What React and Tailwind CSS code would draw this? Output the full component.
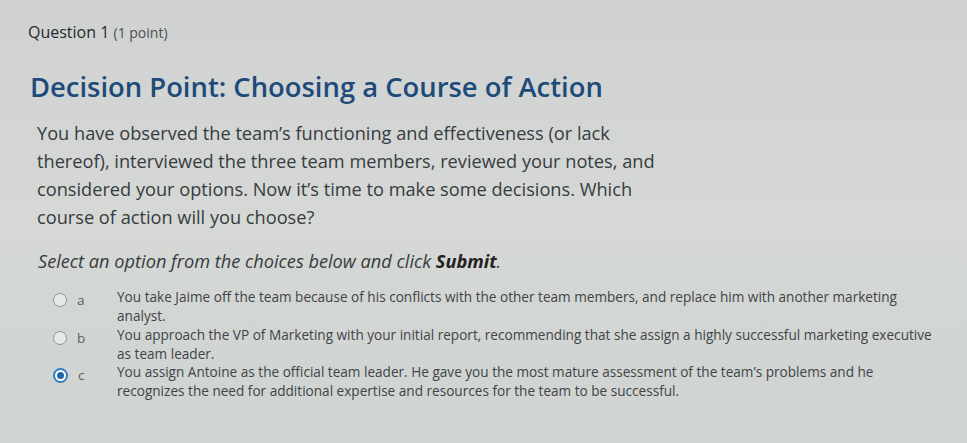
import React, { useState } from 'react';

const options = [
  {
    id: 'a',
    text: 'You take Jaime off the team because of his conflicts with the other team members, and replace him with another marketing analyst.',
  },
  {
    id: 'b',
    text: 'You approach the VP of Marketing with your initial report, recommending that she assign a highly successful marketing executive as team leader.',
  },
  {
    id: 'c',
    text: "You assign Antoine as the official team leader. He gave you the most mature assessment of the team\u2019s problems and he recognizes the need for additional expertise and resources for the team to be successful.",
  },
];

const Radio = ({ checked }) =>
  checked ? (
    <span className="flex h-[15px] w-[15px] items-center justify-center rounded-full border-2 border-[#2f7fc0] bg-white">
      <span className="h-[7px] w-[7px] rounded-full bg-[#1f63a8]" />
    </span>
  ) : (
    <span className="h-[14px] w-[14px] rounded-full border border-[#8f9596] bg-[#e6e8e7]" />
  );

const App = () => {
  const [selected, setSelected] = useState('c');

  return (
    <div
      className="h-[443px] w-full overflow-hidden bg-gradient-to-b from-[#cfd2d1] via-[#d5d8d5] to-[#cfd3d1] text-[#3b4044]"
      style={{ fontFamily: '"Open Sans", "Liberation Sans", sans-serif' }}
    >
      <div className="px-7 pt-[20px]">
        <div className="text-[16px] text-[#262a2d]">
          Question 1 <span className="text-[14px] text-[#4a5055]">(1 point)</span>
        </div>

        <h1 className="mt-[26px] pl-[2px] text-[27.4px] font-semibold leading-[34px] text-[#1d4b79]">
          Decision Point: Choosing a Course of Action
        </h1>

        <p className="mt-[15px] w-[720px] pl-[9px] text-[18.2px] leading-[28px] text-[#373c40]">
          You have observed the team’s functioning and effectiveness (or lack
          <br />
          thereof), interviewed the three team members, reviewed your notes, and
          <br />
          considered your options. Now it’s time to make some decisions. Which
          <br />
          course of action will you choose?
        </p>

        <p className="mt-[17px] pl-[10px] text-[18.2px] italic text-[#373c40]">
          Select an option from the choices below and click <span className="font-bold text-[#222]">Submit</span>.
        </p>

        <div className="mt-[13px] flex flex-col">
          {options.map((o) => (
            <div
              key={o.id}
              className="flex cursor-pointer items-start"
              onClick={() => setSelected(o.id)}
            >
              <div className="flex w-[89px] shrink-0 items-center gap-[10px] pl-[25px] pt-[2px]">
                <Radio checked={selected === o.id} />
                <span className="text-[13.5px] text-[#5a6064]">{o.id}</span>
              </div>
              <div className="w-[822px] text-[13.6px] leading-[18.8px] text-[#3f4448]">{o.text}</div>
            </div>
          ))}
        </div>
      </div>
    </div>
  );
};

export default App;
